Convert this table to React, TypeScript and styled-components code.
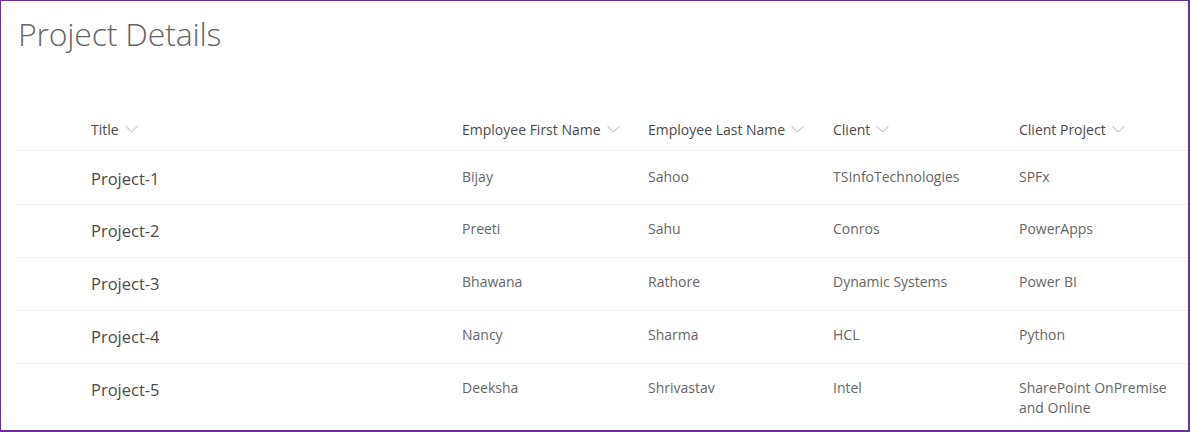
import React from "react";
import styled, { createGlobalStyle } from "styled-components";

const Global = createGlobalStyle`
  html, body { margin: 0; padding: 0; background: #fff; }
  body { font-family: "Open Sans", "Noto Sans", sans-serif; }
  * { box-sizing: border-box; }
`;

const Frame = styled.div`
  width: 1190px;
  height: 432px;
  border-left: 1px solid #6d2f9e;
  border-top: 1px solid #6d2f9e;
  border-right: 2px solid #6d2f9e;
  border-bottom: 2px solid #6d2f9e;
  overflow: hidden;
  padding: 0 0 0 16px;
`;

const Heading = styled.h1`
  margin: 0;
  height: 107px;
  padding: 11px 0 0 1px;
  font-family: "Open Sans", sans-serif;
  font-weight: 300;
  font-size: 32px;
  letter-spacing: -0.2px;
  color: #666;
`;

const Cols = "74px 371px 186px 185px 186px 1fr";

const HeaderRow = styled.div`
  display: grid;
  grid-template-columns: ${Cols};
  height: 42px;
  align-items: center;
`;

const HeaderCell = styled.div`
  display: flex;
  align-items: center;
  gap: 6px;
  font-size: 14px;
  color: #4a4a4a;
`;

const Row = styled.div<{ $first?: boolean }>`
  display: grid;
  grid-template-columns: ${Cols};
  border-top: 1px solid #efefef;
  min-height: ${(p) => (p.$first ? 54 : 53)}px;
  align-items: start;
  padding-top: ${(p) => (p.$first ? 16 : 14)}px;
`;

const Cell = styled.div<{ $big?: boolean }>`
  font-size: ${(p) => (p.$big ? "16.5px" : "14px")};
  color: ${(p) => (p.$big ? "#4a4a4a" : "#666")};
  line-height: 20px;
  padding-top: ${(p) => (p.$big ? "2px" : "0")};
  padding-right: 8px;
`;

const Chevron = () => (
  <svg width="13" height="8" viewBox="0 0 13 8" fill="none">
    <path d="M0.5 1 L6.5 7 L12.5 1" stroke="#b0b0b0" strokeWidth="1" />
  </svg>
);

const headers = [
  "Title",
  "Employee First Name",
  "Employee Last Name",
  "Client",
  "Client Project",
];

const rows = [
  ["Project-1", "Bijay", "Sahoo", "TSInfoTechnologies", "SPFx"],
  ["Project-2", "Preeti", "Sahu", "Conros", "PowerApps"],
  ["Project-3", "Bhawana", "Rathore", "Dynamic Systems", "Power BI"],
  ["Project-4", "Nancy", "Sharma", "HCL", "Python"],
  ["Project-5", "Deeksha", "Shrivastav", "Intel", "SharePoint OnPremise and Online"],
];

export default function App() {
  return (
    <>
      <Global />
      <Frame>
        <Heading>Project Details</Heading>
        <HeaderRow>
          <div />
          {headers.map((h) => (
            <HeaderCell key={h}>
              {h}
              <Chevron />
            </HeaderCell>
          ))}
        </HeaderRow>
        {rows.map((r, i) => (
          <Row key={r[0]} $first={i === 0}>
            <div />
            {r.map((c, j) => (
              <Cell key={j} $big={j === 0}>
                {c}
              </Cell>
            ))}
          </Row>
        ))}
      </Frame>
    </>
  );
}
